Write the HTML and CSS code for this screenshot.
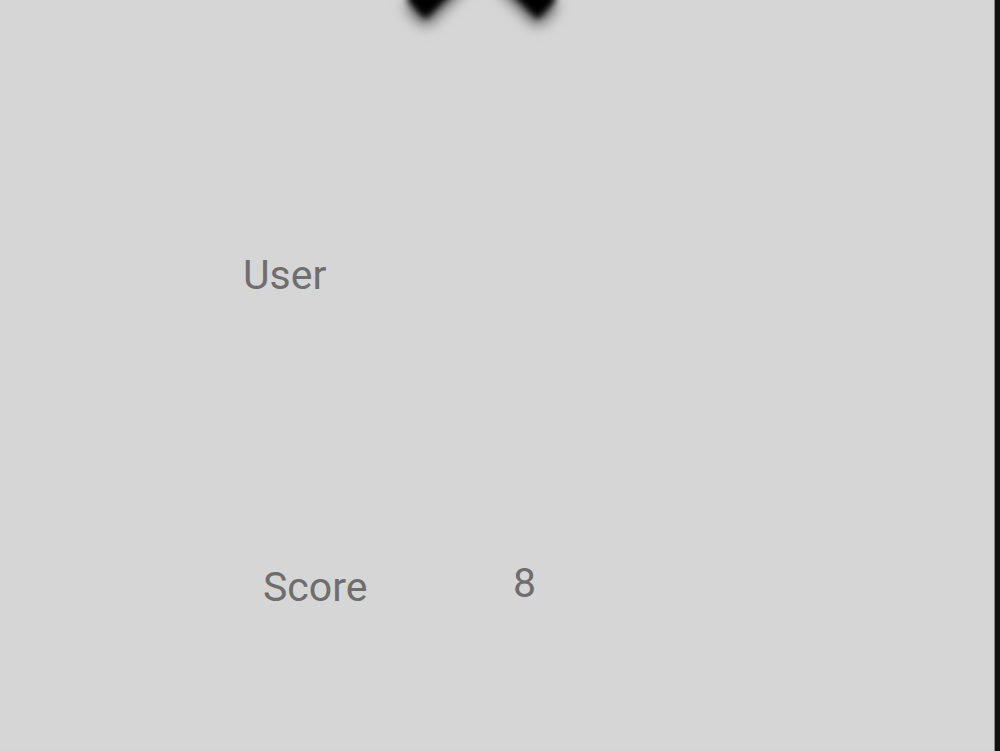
FILE: index.html
```html
<!DOCTYPE html>
<html lang="en">
<head>
  <meta charset="UTF-8" />
  <meta name="viewport" content="width=device-width, initial-scale=1" />
  <title>Score</title>
  <link rel="stylesheet" href="styles.css">
</head>
<body>

  <div class="screen">
    <div class="top">
      <!-- collapse arrow, mostly scrolled off the top -->
      <svg class="arrow" width="200" height="60" viewBox="0 0 200 60">
        <polyline points="36,9 101.5,-56.5 167,9" fill="none" stroke="#000" stroke-width="27" />
      </svg>
    </div>

    <div class="user">User</div>

    <div class="score">
      <span class="label">Score</span>
      <span class="value">8</span>
    </div>
  </div>

  <div class="edge"></div>

</body>
</html>
```

FILE: styles.css
```css
html, body {
  margin: 0;
  height: 100%;
}
body {
  display: flex;
  background-color: #d6d6d6;
  font-family: Roboto, 'Liberation Sans', sans-serif;
  color: #6e6e6e;
  overflow: hidden;
}
.screen {
  flex: 1;
  height: 751px;
}
.top {
  height: 60px;
  padding-left: 380px;
}
.arrow {
  display: block;
  overflow: visible;
  filter: blur(3px) drop-shadow(0 7px 7px rgba(0, 0, 0, 0.75));
}
.user {
  font-size: 41px;
  line-height: 1;
  margin-top: 195px;
  padding-left: 243px;
}
.score {
  display: flex;
  align-items: flex-start;
  margin-top: 267px;
  padding-left: 263px;
  font-size: 41px;
  line-height: 1;
}
.label {
  margin-top: 4px;
  width: 250px;
}
.edge {
  width: 5px;
  height: 751px;
  background-color: #111;
  border-left: 1px solid #888;
}
```
